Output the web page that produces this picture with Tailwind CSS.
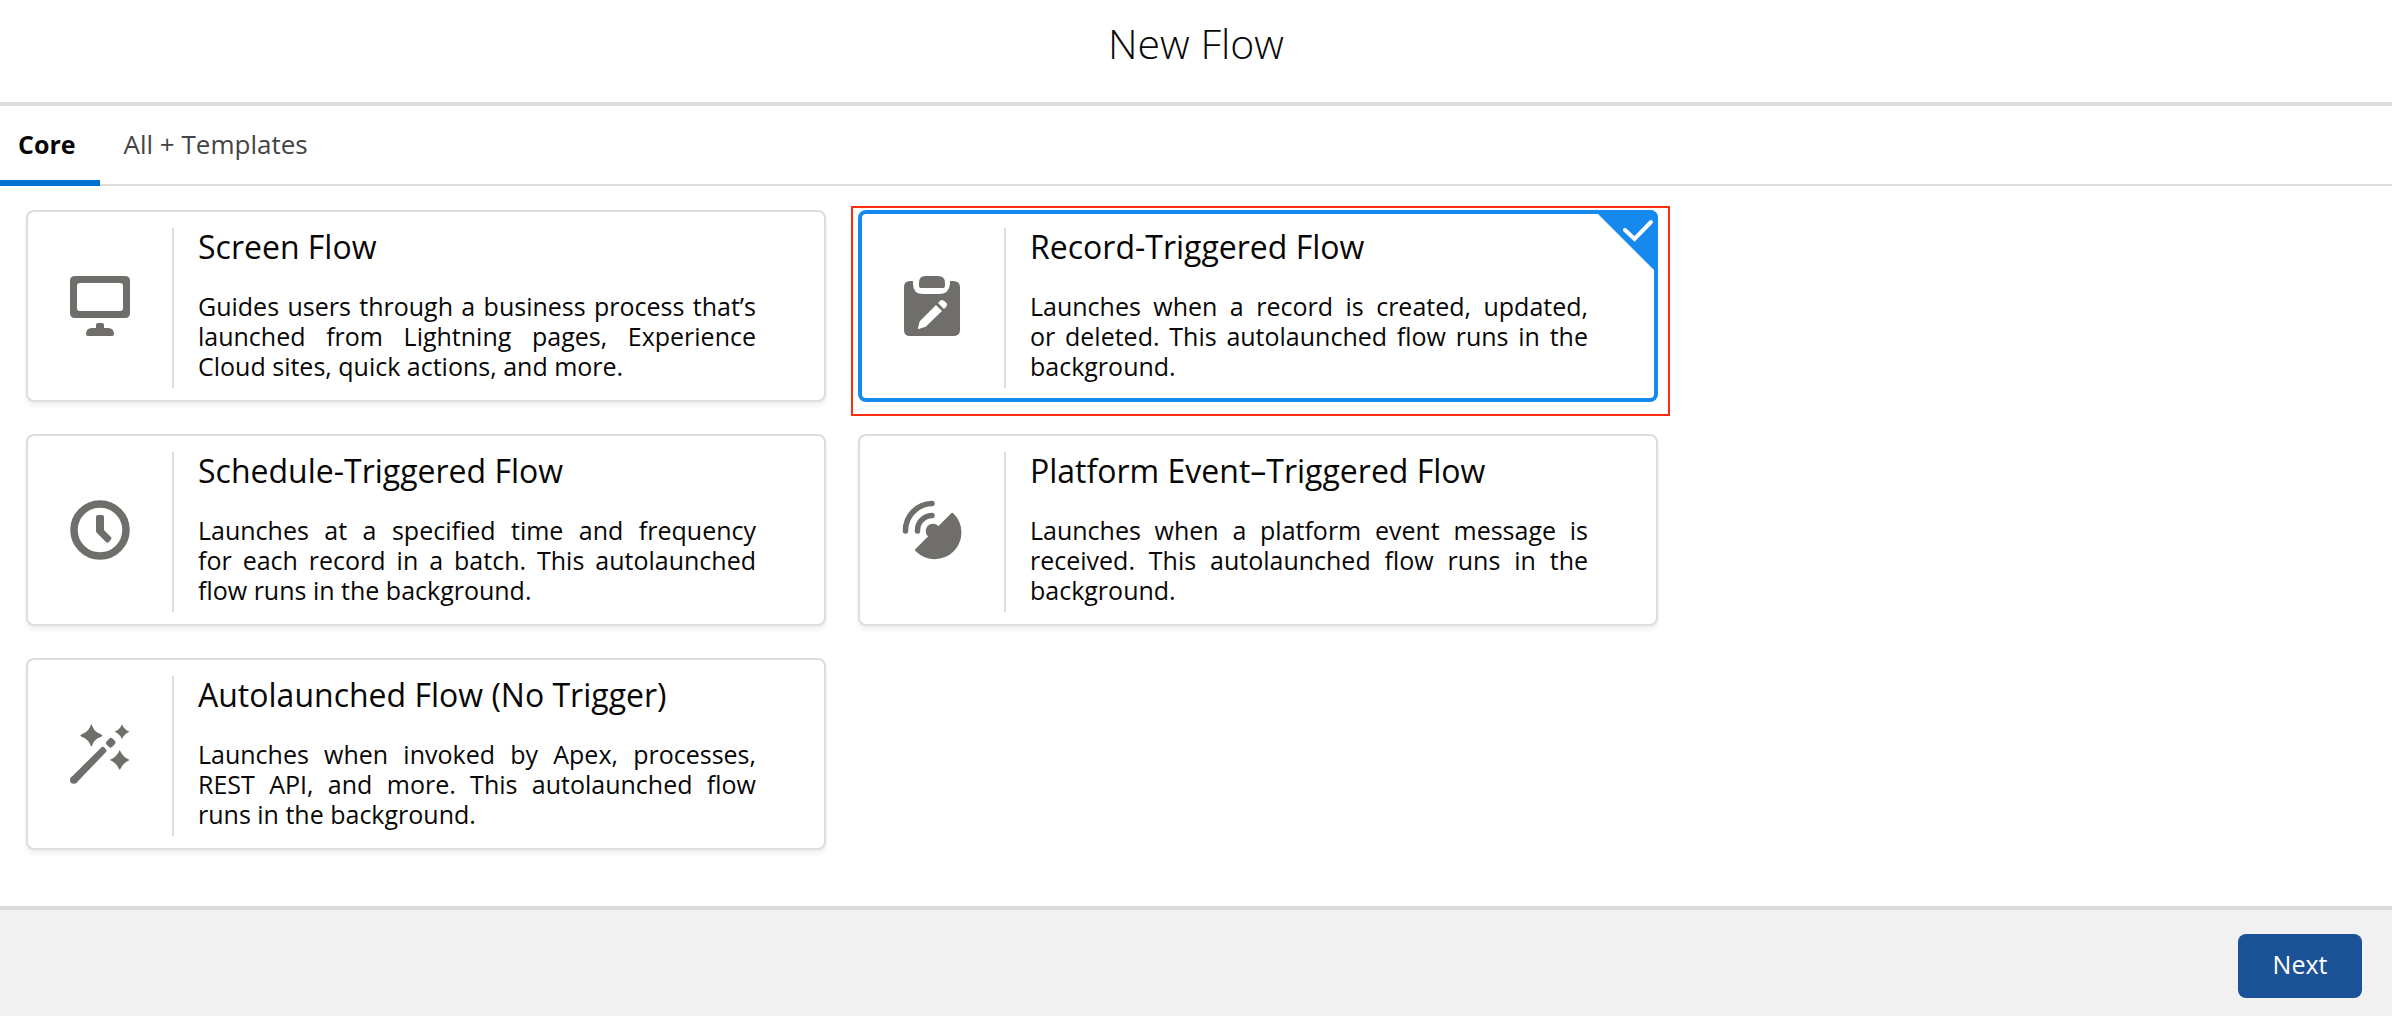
<!DOCTYPE html>
<html lang="en">

<head>
  <meta charset="UTF-8" />
  <meta name="viewport" content="width=device-width, initial-scale=1" />
  <title>New Flow</title>
  <script src="https://cdn.jsdelivr.net/npm/@tailwindcss/browser@4"></script>
</head>

<body class="min-h-screen flex flex-col bg-white text-[#080707] text-[26px] font-['Open_Sans','Noto_Sans',sans-serif]">

  <!-- Header -->
  <header class="h-[106px] border-b-4 border-[#dddbda] pt-4 text-center">
    <h1 class="text-[41px] leading-[54px] font-light">New Flow</h1>
  </header>

  <!-- Tabs -->
  <nav class="h-20 flex border-b-2 border-[#dddddd]">
    <a href="#core" aria-current="page" class="h-20 pl-[18px] pr-6 pt-3 leading-[52px] text-[25px] font-bold border-b-6 border-[#0070d2]">Core</a>
    <a href="#all" class="px-6 pt-3 leading-[52px] text-[#444444]">All + Templates</a>
  </nav>

  <!-- Flow types -->
  <main id="core" class="flex-1 px-[26px] py-6">
    <fieldset aria-label="Flow type" class="flex flex-wrap gap-8 max-w-[1640px] text-[25px]">

      <label class="relative w-[800px] h-48 flex py-4 pr-[70px] rounded-lg shadow-[0_0_0_2px_#dddddd_inset,0_4px_4px_rgba(0,0,0,0.06)]">
        <input type="radio" name="flow" class="sr-only" />
        <span class="w-[148px] h-40 mt-[2px] pl-[2px] pb-1 shrink-0 flex items-center justify-center border-r-2 border-[#dddddd]">
          <svg class="w-[60px] h-[60px]" viewBox="0 0 60 60" fill="#706e6b" aria-hidden="true">
            <path fill-rule="evenodd" d="M5 0H55Q60 0 60 5V37Q60 42 55 42H5Q0 42 0 37V5Q0 0 5 0ZM10 7Q7 7 7 10V32Q7 35 10 35H50Q53 35 53 32V10Q53 7 50 7Z" />
            <path d="M28 47H32Q34 47 34 49V52H38Q44 52 44 58Q44 60 42 60H18Q16 60 16 58Q16 52 22 52H26V49Q26 47 28 47Z" />
          </svg>
        </span>
        <span class="flex-1 pl-6">
          <span class="block text-[32px] leading-[42px]">Screen Flow</span>
          <span class="block mt-[23px] leading-[30px] text-justify">Guides users through a business process that’s launched from Lightning pages, Experience Cloud sites, quick actions, and more.</span>
        </span>
      </label>

      <label class="relative w-[800px] h-48 flex py-4 pr-[70px] rounded-lg shadow-[0_0_0_4px_#1589ee_inset]">
        <input type="radio" name="flow" class="sr-only" checked />
        <span class="w-[148px] h-40 mt-[2px] pl-[2px] pb-1 shrink-0 flex items-center justify-center border-r-2 border-[#dddddd]">
          <svg class="w-[60px] h-[60px]" viewBox="0 0 60 60" aria-hidden="true">
            <path fill="#706e6b" d="M8 5H11V8Q11 18 21 18H37Q47 18 48 8V5H51Q58 5 58 11V54Q58 60 51 60H8Q2 60 2 54V11Q2 5 8 5Z" />
            <path fill="#706e6b" d="M23 0H36Q43 0 43 7V10Q43 12 41 12H19Q17 12 17 10V7Q17 0 23 0Z" />
            <path fill="#fff" d="M34 29L40 35L25 49.500Q24 50.500 23 51L16.500 53Q15.500 53 16 52L17.500 46Q18 45 19 44ZM36 27L38 25Q40 23 42 25L44 26.500Q46 28.500 44 31L42 33Z" />
          </svg>
        </span>
        <span class="flex-1 pl-6">
          <span class="block text-[32px] leading-[42px]">Record-Triggered Flow</span>
          <span class="block mt-[23px] leading-[30px] text-justify">Launches when a record is created, updated, or&nbsp;deleted. This autolaunched flow runs in the background.</span>
        </span>
        <!-- selected corner -->
        <svg class="absolute top-0 right-0 w-16 h-16 rounded-tr-lg" viewBox="0 0 64 64" aria-hidden="true">
          <path fill="#1589ee" d="M0 0H64V64Z" />
          <path fill="none" stroke="#fff" stroke-width="4" stroke-linecap="round" d="M31 20L40.500 29L57 12" />
        </svg>
        <!-- callout frame -->
        <span class="absolute -top-1 -left-[7px] -right-3 -bottom-[14px] border-2 border-[#ff2d0f]"></span>
      </label>

      <label class="relative w-[800px] h-48 flex py-4 pr-[70px] rounded-lg shadow-[0_0_0_2px_#dddddd_inset,0_4px_4px_rgba(0,0,0,0.06)]">
        <input type="radio" name="flow" class="sr-only" />
        <span class="w-[148px] h-40 mt-[2px] pl-[2px] pb-1 shrink-0 flex items-center justify-center border-r-2 border-[#dddddd]">
          <svg class="w-[60px] h-[60px]" viewBox="0 0 60 60" aria-hidden="true">
            <circle cx="30" cy="30" r="26" fill="none" stroke="#706e6b" stroke-width="7.500" />
            <path fill="#706e6b" d="M28 15H32Q34 15 34 17V30L41 37Q42 38 41 39.500L39 42Q37.500 43.500 36 42L27 33Q26 32 26 31V17Q26 15 28 15Z" />
          </svg>
        </span>
        <span class="flex-1 pl-6">
          <span class="block text-[32px] leading-[42px]">Schedule-Triggered Flow</span>
          <span class="block mt-[23px] leading-[30px] text-justify">Launches at a specified time and frequency for&nbsp;each record in a batch. This autolaunched flow&nbsp;runs in the background.</span>
        </span>
      </label>

      <label class="relative w-[800px] h-48 flex py-4 pr-[70px] rounded-lg shadow-[0_0_0_2px_#dddddd_inset,0_4px_4px_rgba(0,0,0,0.06)]">
        <input type="radio" name="flow" class="sr-only" />
        <span class="w-[148px] h-40 mt-[2px] pl-[2px] pb-1 shrink-0 flex items-center justify-center border-r-2 border-[#dddddd]">
          <svg class="w-[60px] h-[60px]" viewBox="0 0 60 60" aria-hidden="true">
            <path fill="none" stroke="#706e6b" stroke-width="5.500" stroke-linecap="round" d="M30 3.500A27 27 0 0 0 3.500 31M30 15.500A15 15 0 0 0 15.500 31" />
            <circle cx="31" cy="31" r="7.300" fill="#706e6b" />
            <path fill="#706e6b" d="M48.500 14Q50 11.800 51.500 13.500A26.500 26.500 0 0 1 14 51.500Q12 50 14 48.500Z" />
          </svg>
        </span>
        <span class="flex-1 pl-6">
          <span class="block text-[32px] leading-[42px]">Platform Event–Triggered Flow</span>
          <span class="block mt-[23px] leading-[30px] text-justify">Launches when a platform event message is received. This autolaunched flow runs in the background.</span>
        </span>
      </label>

      <label class="relative w-[800px] h-48 flex py-4 pr-[70px] rounded-lg shadow-[0_0_0_2px_#dddddd_inset,0_4px_4px_rgba(0,0,0,0.06)]">
        <input type="radio" name="flow" class="sr-only" />
        <span class="w-[148px] h-40 mt-[2px] pl-[2px] pb-1 shrink-0 flex items-center justify-center border-r-2 border-[#dddddd]">
          <svg class="w-[60px] h-[60px]" viewBox="0 0 60 60" fill="#706e6b" aria-hidden="true">
            <circle cx="3.800" cy="56" r="3.800" />
            <path d="M1 53.500L31.500 23.300Q33 22 34.300 23.500L36 25.500Q37 27 36 28L6.500 58.800Z" />
            <path d="M39.500 14.500Q41 13.200 42.500 14.500L45 17Q46.300 18.500 45 20L42 23Q40.500 24.300 39 23L36.500 20.500Q35.300 19 36.500 17.500Z" />
            <path d="M21.300 0.500Q22 0.500 22.500 2.500Q24.500 8 30.500 10Q32.500 11 32.500 11.500Q32.500 12 30.500 13Q24.500 15 22.500 20.500Q22 22.500 21.300 22.500Q20.700 22.500 20.200 20.500Q18 15 12.200 13Q10.200 12 10.200 11.500Q10.200 11 12.200 10Q18 8 20.200 2.500Q20.700 0.500 21.300 0.500Z" />
            <path d="M52 0.300Q54 5.700 59.500 7.700Q54 9.700 52 15.200Q50 9.700 44.500 7.700Q50 5.700 52 0.300Z" />
            <path d="M49.700 26Q52.700 33.300 59.700 36Q52.700 38.700 49.700 46Q46.800 38.700 39.700 36Q46.800 33.300 49.700 26Z" />
          </svg>
        </span>
        <span class="flex-1 pl-6">
          <span class="block text-[32px] leading-[42px]">Autolaunched Flow (No Trigger)</span>
          <span class="block mt-[23px] leading-[30px] text-justify">Launches when invoked by Apex, processes, REST API, and more. This autolaunched flow runs in the background.</span>
        </span>
      </label>
    </fieldset>
  </main>

  <!-- Footer -->
  <footer class="h-[110px] flex justify-end items-start border-t-4 border-[#dddbda] bg-[#f1f1f1] pt-6 pr-[30px]">
    <button type="button" class="w-[124px] h-16 pb-[2px] rounded-lg bg-[#1b5297] text-[25px] text-white">Next</button>
  </footer>

</body>

</html>
